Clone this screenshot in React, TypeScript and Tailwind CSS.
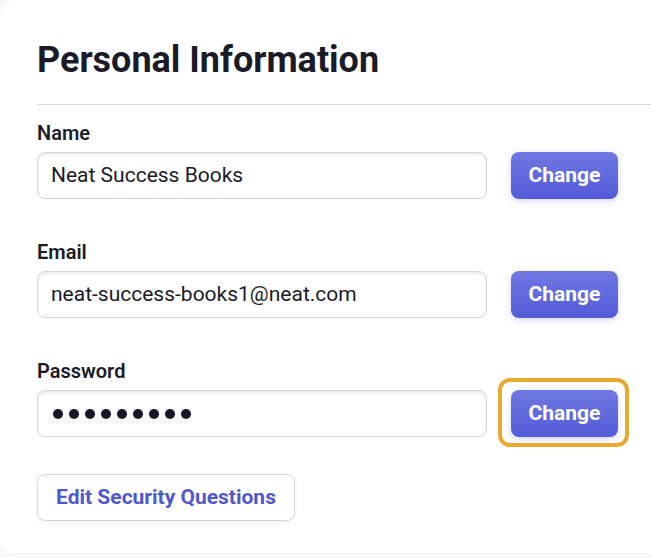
import React from "react";

const btn =
  "w-[107px] h-[47px] rounded-[8px] bg-gradient-to-b from-[#7078e2] to-[#535bd8] text-white text-[21px] font-bold shadow-[0_2px_6px_rgba(80,90,200,0.25)] flex items-center justify-center";
const input =
  "w-[450px] h-[47px] rounded-[8px] border border-[#d4d4dc] bg-white shadow-[inset_0_2px_3px_rgba(0,0,0,0.08)] flex items-center px-[13px] text-[21px] text-[#1b1b26]";

function Field({ label, children, highlight }: { label: string; children: React.ReactNode; highlight?: boolean }) {
  return (
    <div className="flex flex-col">
      <div className="text-[20px] font-semibold text-[#1c1c28] leading-[24px]">{label}</div>
      <div className="flex items-center mt-[7px]">
        <div className={input}>{children}</div>
        <div className="ml-[24px] relative">
          {highlight && (
            <div className="absolute -left-[13px] -right-[11px] -top-[12px] -bottom-[10px] rounded-[12px] border-[4px] border-[#e9a92e]" />
          )}
          <div className={btn}>Change</div>
        </div>
      </div>
    </div>
  );
}

export default function App() {
  return (
    <div className="w-[652px] h-[558px] bg-[#fafafb] overflow-hidden" style={{ fontFamily: "Roboto, 'Liberation Sans', sans-serif" }}>
      <div className="w-[680px] h-[553px] bg-white rounded-l-[14px] shadow-[0_0_4px_rgba(0,0,0,0.05)] pl-[37px] pt-[40px]">
        <h1 className="text-[36px] font-bold text-[#1a1b26] leading-[40px]">Personal Information</h1>
        <div className="h-px bg-[#d6d6da] mt-[24px] w-[614px]" />
        <div className="mt-[16px] flex flex-col gap-[41px]">
          <Field label="Name">Neat Success Books</Field>
          <Field label="Email">neat-success-books1@neat.com</Field>
          <Field label="Password" highlight>
            <div className="flex gap-[6px] pl-[2px]">
              {Array.from({ length: 9 }).map((_, i) => (
                <span key={i} className="w-[10px] h-[10px] rounded-full bg-[#161827]" />
              ))}
            </div>
          </Field>
        </div>
        <div className="mt-[37px] w-[258px] h-[47px] rounded-[8px] border border-[#d4d4dc] bg-white shadow-[0_2px_4px_rgba(0,0,0,0.05)] flex items-center justify-center text-[21px] font-bold text-[#5059cc]">
          Edit Security Questions
        </div>
      </div>
    </div>
  );
}
